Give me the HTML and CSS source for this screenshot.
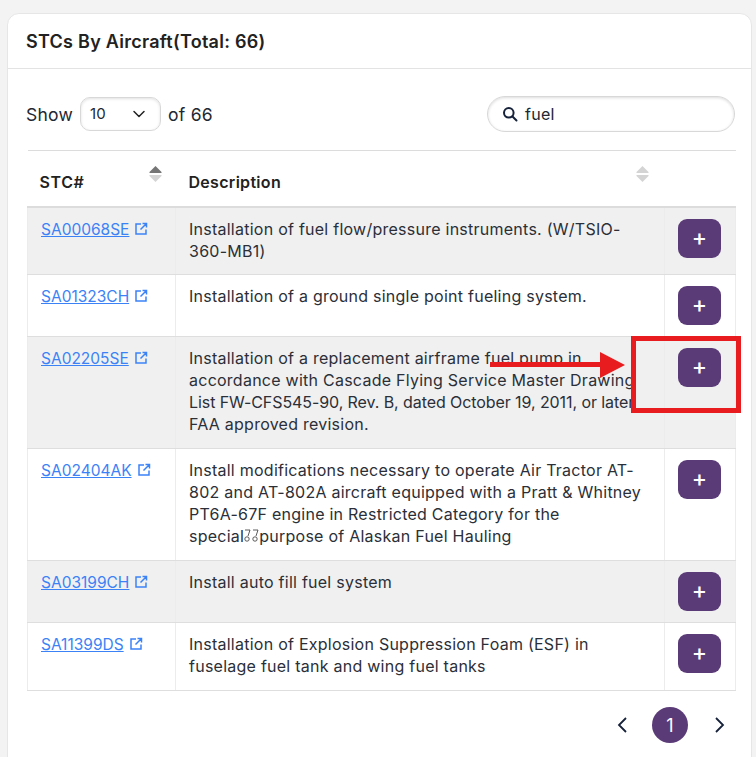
FILE: index.html
```html
<!DOCTYPE html>
<html lang="en">
<head>
<meta charset="utf-8">
<title>STCs By Aircraft</title>
<link rel="stylesheet" href="styles.css">
</head>
<body>
<section class="card">
  <h2 class="card-title">STCs By Aircraft(Total: 66)</h2>
  <div class="card-body">
    <div class="toolbar">
      <div class="show">
        <span>Show</span>
        <div class="select"><span>10</span>
          <svg class="chev" width="14" height="8" viewBox="0 0 14 8"><path d="M2 1.500l5 5 5-5" fill="none" stroke="#222" stroke-width="1.500" stroke-linecap="round" stroke-linejoin="round"/></svg>
        </div>
        <span>of 66</span>
      </div>
      <div class="search">
        <svg width="16" height="16" viewBox="0 0 16 16"><circle cx="6.800" cy="6.800" r="4.800" fill="none" stroke="#16213a" stroke-width="2"/><path d="M10.500 10.500l4 4" stroke="#16213a" stroke-width="2" stroke-linecap="round"/></svg>
        <span>fuel</span>
      </div>
    </div>
    <table class="grid">
      <thead>
        <tr>
          <th class="c1"><span class="th-in">STC#<svg class="sort s1" width="13" height="16" viewBox="0 0 13 16"><path d="M6.500 0l6 6v1H.500V6z" fill="#757575"/><path d="M6.500 16l6-6V9H.500v1z" fill="#d4d4d4"/></svg></span></th>
          <th class="c2"><span class="th-in">Description<svg class="sort s2" width="13" height="16" viewBox="0 0 13 16"><path d="M6.500 0l6 6v1H.500V6z" fill="#d4d4d4"/><path d="M6.500 16l6-6V9H.500v1z" fill="#d4d4d4"/></svg></span></th>
          <th class="c3"></th>
        </tr>
      </thead>
      <tbody>
        <tr class="h68"><td><a href="#">SA00068SE</a><svg class="ext" width="14" height="14" viewBox="0 0 14 14"><path d="M7 2H2v10h10V7.500M8.500 1.500h4v4M12.500 1.500L6.500 7.500" fill="none" stroke="#3b82f6" stroke-width="1.500"/></svg></td><td>Installation of fuel flow/pressure instruments. (W/TSIO-<br>360-MB1)</td><td class="act"><button class="add">+</button></td></tr>
        <tr class="h62"><td><a href="#">SA01323CH</a><svg class="ext" width="14" height="14" viewBox="0 0 14 14"><path d="M7 2H2v10h10V7.500M8.500 1.500h4v4M12.500 1.500L6.500 7.500" fill="none" stroke="#3b82f6" stroke-width="1.500"/></svg></td><td>Installation of a ground single point fueling system.</td><td class="act"><button class="add">+</button></td></tr>
        <tr class="h112"><td><a href="#">SA02205SE</a><svg class="ext" width="14" height="14" viewBox="0 0 14 14"><path d="M7 2H2v10h10V7.500M8.500 1.500h4v4M12.500 1.500L6.500 7.500" fill="none" stroke="#3b82f6" stroke-width="1.500"/></svg></td><td>Installation of a replacement airframe fuel pump in<br>accordance with Cascade Flying Service Master Drawing<br><span class="tight">List FW-CFS545-90, Rev. B, dated October 19, 2011, or later</span><br>FAA approved revision.</td><td class="act"><button class="add">+</button></td></tr>
        <tr class="h112"><td><a href="#">SA02404AK</a><svg class="ext" width="14" height="14" viewBox="0 0 14 14"><path d="M7 2H2v10h10V7.500M8.500 1.500h4v4M12.500 1.500L6.500 7.500" fill="none" stroke="#3b82f6" stroke-width="1.500"/></svg></td><td>Install modifications necessary to operate Air Tractor AT-<br>802 and AT-802A aircraft equipped with a Pratt &amp; Whitney<br>PT6A-67F engine in Restricted Category for the<br>special<svg class="tofu" width="15" height="14" viewBox="0 0 15 14"><g fill="none" stroke="#333" stroke-width=".8"><path d="M1 1h5L4 7M9 1h5l-2 6"/><circle cx="3" cy="10" r="2.200"/><circle cx="11" cy="10" r="2.200"/></g></svg>purpose of Alaskan Fuel Hauling</td><td class="act"><button class="add">+</button></td></tr>
        <tr class="h62"><td><a href="#">SA03199CH</a><svg class="ext" width="14" height="14" viewBox="0 0 14 14"><path d="M7 2H2v10h10V7.500M8.500 1.500h4v4M12.500 1.500L6.500 7.500" fill="none" stroke="#3b82f6" stroke-width="1.500"/></svg></td><td>Install auto fill fuel system</td><td class="act"><button class="add">+</button></td></tr>
        <tr class="h68"><td><a href="#">SA11399DS</a><svg class="ext" width="14" height="14" viewBox="0 0 14 14"><path d="M7 2H2v10h10V7.500M8.500 1.500h4v4M12.500 1.500L6.500 7.500" fill="none" stroke="#3b82f6" stroke-width="1.500"/></svg></td><td>Installation of Explosion Suppression Foam (ESF) in<br>fuselage fuel tank and wing fuel tanks</td><td class="act"><button class="add">+</button></td></tr>
      </tbody>
    </table>
    <nav class="pager">
      <svg width="10" height="16" viewBox="0 0 10 16"><path d="M9 1L2 8l7 7" fill="none" stroke="#16213a" stroke-width="1.800"/></svg>
      <span class="page">1</span>
      <svg class="next" width="10" height="16" viewBox="0 0 10 16"><path d="M1 1l7 7-7 7" fill="none" stroke="#16213a" stroke-width="1.800"/></svg>
    </nav>
  </div>
</section>
<div class="callout-box"></div>
<svg class="callout-arrow" width="136" height="28" viewBox="0 0 136 28"><path d="M0 11h110V1l25 13-25 13V16H0z" fill="#e81c1f"/></svg>
</body>
</html>
```
FILE: styles.css
```css
* { box-sizing: border-box; }
html, body { margin: 0; padding: 0; }
body {
  background: #f3f3f3;
  height: 757px;
  overflow: hidden;
  padding: 13px 0 0 7px;
  font-family: "Inter", "Liberation Sans", sans-serif;
  color: #222831;
  position: relative;
}
.card {
  width: 745px;
  height: 760px;
  background: #fff;
  border: 1px solid #e6e6e6;
  border-radius: 12px;
}
.card-title {
  margin: 0;
  height: 55px;
  padding: 1px 18px 0;
  display: flex;
  align-items: center;
  border-bottom: 1px solid #e3e3e3;
  font-size: 18px;
  font-weight: 600;
  letter-spacing: .26px;
  color: #222;
}
.card-body { padding: 0 15px 0 18px; }
.toolbar {
  height: 81px;
  display: flex;
  align-items: center;
  justify-content: space-between;
  padding-top: 8px;
  font-size: 17.500px;
  letter-spacing: .25px;
}
.show { display: flex; align-items: center; gap: 7px; }
.show > span { padding-top: 2px; }
.select {
  width: 81px;
  height: 34px;
  border: 1px solid #d8d8d8;
  border-radius: 10px;
  box-shadow: inset 0 1px 3px rgba(0,0,0,.12);
  display: flex;
  align-items: center;
  justify-content: space-between;
  padding: 0 14px 0 9px;
  font-size: 15px;
  letter-spacing: 0;
}
.search {
  width: 248px;
  height: 36px;
  border: 1px solid #d8d8d8;
  border-radius: 18px;
  box-shadow: inset 0 1px 3px rgba(0,0,0,.14);
  display: flex;
  align-items: center;
  gap: 7px;
  padding-left: 14px;
  margin-right: 1px;
  font-size: 16px;
}
.grid {
  width: 709px;
  margin-left: 1px;
  border-collapse: collapse;
  table-layout: fixed;
  border-top: 1px solid #dcdcdc;
  font-size: 16px;
  letter-spacing: .25px;
  line-height: 22px;
}
.c1 { width: 148px; }
.c3 { width: 71px; }
th {
  height: 56px;
  padding: 8px 13px 0;
  text-align: left;
  font-size: 16px;
  font-weight: 600;
  letter-spacing: .3px;
  color: #222;
  border-bottom: 2px solid #dcdcdc;
}
th.c1 { padding-left: 12px; letter-spacing: .6px; }
.th-in { display: block; position: relative; }
.sort { position: absolute; top: -5px; }
.s1 { right: 1px; }
.s2 { right: 3px; }
td {
  padding: 10px 0 0 13px;
  vertical-align: top;
  border-bottom: 1px solid #dedede;
  border-right: 1px solid #ececec;
}
td:first-child { border-left: 1px solid #ececec; padding-left: 13px; padding-right: 0; }
td:nth-child(2) { color: #2b2f38; }
td.act { padding: 11px 0 0 13px; text-align: left; }
tbody tr:nth-child(odd) td { background: #f0f0f0; }
.h68 { height: 68px; }
.h62 { height: 62px; }
.h112 { height: 112px; }
.tight { letter-spacing: -.08px; }
a { color: #3b82f6; text-decoration: underline; font-size: 15.500px; letter-spacing: 0; }
.ext { margin-left: 5px; vertical-align: -1px; }
.tofu { vertical-align: -1px; }
.add {
  display: block;
  width: 43px;
  height: 39px;
  border: 0;
  border-radius: 9px;
  background: #5b3a78;
  color: #fff;
  font: 500 23px/39px "Inter", "Liberation Sans", sans-serif;
  padding: 0;
}
.pager {
  display: flex;
  justify-content: flex-end;
  align-items: center;
  gap: 25px;
  margin-top: 16px;
  padding-right: 11px;
}
.next { margin-left: 2px; }
.page {
  width: 36px;
  height: 36px;
  border-radius: 50%;
  background: #5b3a78;
  color: #fff;
  display: flex;
  align-items: center;
  justify-content: center;
  font-size: 18px;
}
.callout-box {
  position: absolute;
  left: 631px;
  top: 336px;
  width: 110px;
  height: 77px;
  border: 5px solid #e81c1f;
}
.callout-arrow {
  position: absolute;
  left: 490px;
  top: 351px;
}
```
